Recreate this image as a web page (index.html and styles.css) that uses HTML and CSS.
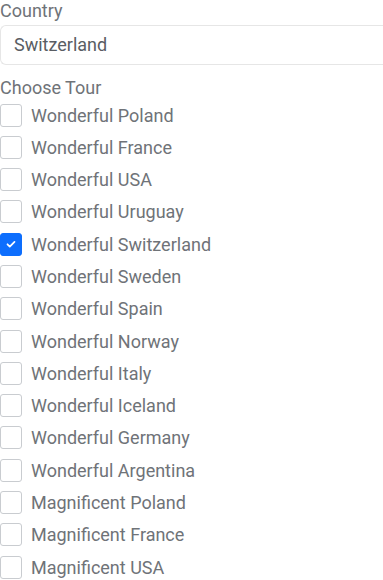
FILE: index.html
```html
<!DOCTYPE html>
<html>
<head>
<meta charset="utf-8">
<link rel="stylesheet" href="styles.css">
</head>
<body>
<div class="form">
  <label class="label">Country</label>
  <div class="input">Switzerland</div>
  <label class="label tour-label">Choose Tour</label>
  <div class="list">
    <div class="row"><span class="box"></span><span class="text">Wonderful Poland</span></div>
    <div class="row"><span class="box"></span><span class="text">Wonderful France</span></div>
    <div class="row"><span class="box"></span><span class="text">Wonderful USA</span></div>
    <div class="row"><span class="box"></span><span class="text">Wonderful Uruguay</span></div>
    <div class="row"><span class="box checked"><svg viewBox="0 0 16 16" width="14" height="14"><path d="M4 8.3l2.6 2.6L12 5.5" fill="none" stroke="#fff" stroke-width="2" stroke-linecap="round" stroke-linejoin="round"/></svg></span><span class="text">Wonderful Switzerland</span></div>
    <div class="row"><span class="box"></span><span class="text">Wonderful Sweden</span></div>
    <div class="row"><span class="box"></span><span class="text">Wonderful Spain</span></div>
    <div class="row"><span class="box"></span><span class="text">Wonderful Norway</span></div>
    <div class="row"><span class="box"></span><span class="text">Wonderful Italy</span></div>
    <div class="row"><span class="box"></span><span class="text">Wonderful Iceland</span></div>
    <div class="row"><span class="box"></span><span class="text">Wonderful Germany</span></div>
    <div class="row"><span class="box"></span><span class="text">Wonderful Argentina</span></div>
    <div class="row"><span class="box"></span><span class="text">Magnificent Poland</span></div>
    <div class="row"><span class="box"></span><span class="text">Magnificent France</span></div>
    <div class="row"><span class="box"></span><span class="text">Magnificent USA</span></div>
  </div>
</div>
</body>
</html>
```
FILE: styles.css
```css
html, body {
  margin: 0;
  padding: 0;
  background: #fff;
  overflow: hidden;
}
.form {
  width: 100%;
  font-family: Roboto, "Noto Sans", sans-serif;
  font-size: 18px;
  color: #6f7378;
  display: flex;
  flex-direction: column;
}
.label {
  display: block;
  height: 25px;
  line-height: 22px;
  color: #6f7378;
}
.input {
  box-sizing: border-box;
  height: 40px;
  border: 1px solid #e6e6e6;
  border-right: none;
  border-radius: 6px 0 0 6px;
  padding: 0 13px;
  line-height: 38px;
  color: #595d63;
}
.tour-label {
  margin-top: 12px;
  height: 22px;
}
.list {
  display: flex;
  flex-direction: column;
}
.row {
  height: 32.29px;
  display: flex;
  align-items: center;
  gap: 9px;
}
.box {
  box-sizing: border-box;
  width: 22px;
  height: 23px;
  border: 1px solid #c9ccd0;
  border-radius: 3px;
  display: flex;
  align-items: center;
  justify-content: center;
  flex: none;
}
.box.checked {
  background: #0d6efd;
  border-color: #0d6efd;
}
.text {
  color: #6f7378;
}
```
